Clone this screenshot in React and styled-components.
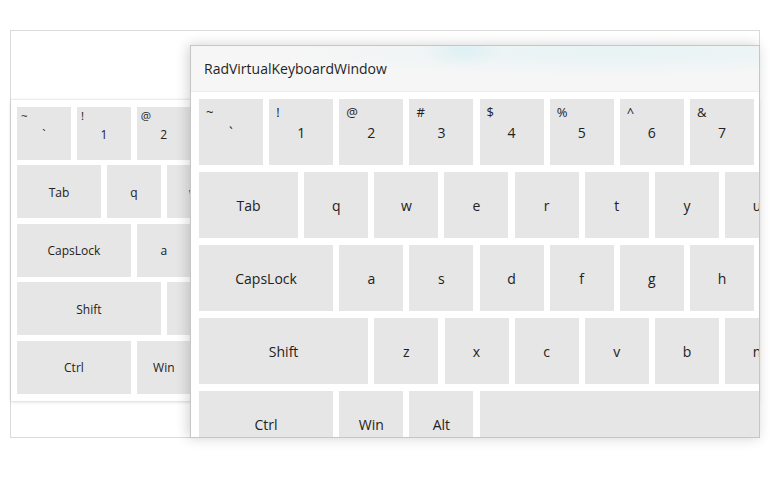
import styled, { createGlobalStyle } from "styled-components";

const GlobalStyle = createGlobalStyle`
  html, body {
    margin: 0;
    background: #ffffff;
    font-family: "Segoe UI", "Open Sans", "Noto Sans", sans-serif;
    color: #1f1f1f;
  }
`;

const ROWS = [
  [
    { s: "~", m: "`" },
    { s: "!", m: "1" },
    { s: "@", m: "2" },
    { s: "#", m: "3" },
    { s: "$", m: "4" },
    { s: "%", m: "5" },
    { s: "^", m: "6" },
    { s: "&", m: "7" },
    { s: "*", m: "8" },
    { s: "(", m: "9" },
    { s: ")", m: "0" },
    { s: "_", m: "-" },
    { s: "+", m: "=" },
    { m: "Backspace", u: 2 },
  ],
  [
    { m: "Tab", u: 1.5 },
    ..."qwertyuiop".split("").map((m) => ({ m })),
    { s: "{", m: "[" },
    { s: "}", m: "]" },
    { s: "|", m: "\\", u: 1.5 },
  ],
  [
    { m: "CapsLock", u: 2 },
    ..."asdfghjkl".split("").map((m) => ({ m })),
    { s: ":", m: ";" },
    { s: '"', m: "'" },
    { m: "Enter", u: 2 },
  ],
  [
    { m: "Shift", u: 2.5 },
    ..."zxcvbnm".split("").map((m) => ({ m })),
    { s: "<", m: "," },
    { s: ">", m: "." },
    { s: "?", m: "/" },
    { m: "Shift", u: 2.5 },
  ],
  [
    { m: "Ctrl", u: 2 },
    { m: "Win" },
    { m: "Alt" },
    { m: "", u: 6 },
    { m: "Alt" },
    { m: "Win" },
    { m: "Ctrl", u: 2 },
  ],
];

// two keyboards: the small one behind, the large one inside the window
const sizes = {
  large: { unit: 70.15, gap: 6.15, height: 66, rowGap: 7, main: 14, shift: 13, padX: 7, padY: 4 },
  small: { unit: 59.9, gap: 5.9, height: 53, rowGap: 5.4, main: 12, shift: 11.5, padX: 4, padY: 1 },
};

const Stage = styled.div`
  padding: 30px 10px;
`;

const Frame = styled.div`
  position: relative;
  box-sizing: border-box;
  width: 750px;
  height: 408px;
  border: 1px solid #dadada;
  background: #ffffff;
`;

const TopSpace = styled.div`
  height: 68px;
`;

const BackPanel = styled.div`
  box-sizing: border-box;
  height: 302px;
  border-top: 1px solid #ededed;
  padding: 7px 6px;
  overflow: hidden;
  background: #ffffff;
  box-shadow: 0 1px 3px rgba(0, 0, 0, 0.16);
`;

const Keyboard = styled.div`
  display: flex;
  flex-direction: column;
  gap: ${({ $size }) => sizes[$size].rowGap}px;
`;

const Row = styled.div`
  display: flex;
  gap: ${({ $size }) => sizes[$size].gap}px;
`;

const Key = styled.div`
  flex-shrink: 0;
  box-sizing: border-box;
  display: grid;
  width: ${({ $size, $u }) => $u * sizes[$size].unit - sizes[$size].gap}px;
  height: ${({ $size }) => sizes[$size].height}px;
  padding: ${({ $size }) => `${sizes[$size].padY}px ${sizes[$size].padX}px`};
  background: #e6e6e6;
  color: #222222;
`;

const MainLabel = styled.span`
  grid-area: 1 / 1;
  place-self: center;
  padding-top: 2px;
  font-size: ${({ $size }) => sizes[$size].main}px;
  line-height: 1;
`;

const ShiftLabel = styled.span`
  grid-area: 1 / 1;
  align-self: start;
  justify-self: start;
  font-size: ${({ $size }) => sizes[$size].shift}px;
  line-height: 1.4;
`;

const Window = styled.div`
  position: absolute;
  left: 179px;
  top: 14px;
  right: -1px;
  bottom: -1px;
  display: flex;
  flex-direction: column;
  border: 1px solid #c6c6c6;
  background: #ffffff;
  overflow: hidden;
  box-shadow: -2px 0 12px rgba(0, 0, 0, 0.18);
`;

const TitleBar = styled.div`
  flex-shrink: 0;
  height: 45px;
  display: flex;
  align-items: center;
  padding: 0 13px;
  border-bottom: 1px solid #ececec;
  background:
    radial-gradient(ellipse 40px 18px at 272px 4px, rgba(210, 238, 242, 0.6), rgba(210, 238, 242, 0) 100%),
    radial-gradient(ellipse 320px 24px at 420px 6px, rgba(222, 241, 244, 0.65), rgba(222, 241, 244, 0) 100%),
    #f6f6f6;
  font-size: 14px;
  color: #1f1f1f;
`;

const WindowBody = styled.div`
  padding: 7px 8px;
`;

function VirtualKeyboard({ size }) {
  return (
    <Keyboard $size={size}>
      {ROWS.map((row, ri) => (
        <Row key={ri} $size={size}>
          {row.map((k, ki) => (
            <Key key={ki} $size={size} $u={k.u || 1}>
              {k.s && <ShiftLabel $size={size}>{k.s}</ShiftLabel>}
              <MainLabel $size={size}>{k.m}</MainLabel>
            </Key>
          ))}
        </Row>
      ))}
    </Keyboard>
  );
}

export default function App() {
  return (
    <>
      <GlobalStyle />
      <Stage>
        <Frame>
          <TopSpace />
          <BackPanel>
            <VirtualKeyboard size="small" />
          </BackPanel>
          <Window>
            <TitleBar>RadVirtualKeyboardWindow</TitleBar>
            <WindowBody>
              <VirtualKeyboard size="large" />
            </WindowBody>
          </Window>
        </Frame>
      </Stage>
    </>
  );
}
